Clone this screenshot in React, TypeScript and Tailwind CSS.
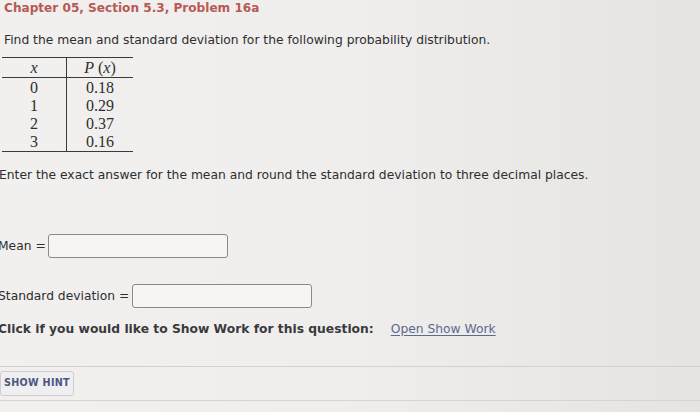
import React from "react";

const rows = [
  { x: "0", p: "0.18" },
  { x: "1", p: "0.29" },
  { x: "2", p: "0.37" },
  { x: "3", p: "0.16" },
];

const App = () => {
  return (
    <div
      className="w-[700px] h-[412px] overflow-hidden bg-gradient-to-r from-[#f1f0ee] via-[#efeeec] to-[#e6e4e1] text-[#2e2e30] text-[12.3px] relative"
      style={{ fontFamily: '"DejaVu Sans", Verdana, sans-serif' }}
    >
      <div className="flex flex-col">
        {/* Title */}
        <div className="pl-[4px] leading-[16px] font-bold text-[#b65a55] text-[12.1px]">
          Chapter 05, Section 5.3, Problem 16a
        </div>

        {/* Question */}
        <div className="pl-[4px] mt-[16px] leading-[16px]">
          Find the mean and standard deviation for the following probability distribution.
        </div>

        {/* Table */}
        <div className="ml-[2px] mt-[9px] w-[131px]" style={{ fontFamily: '"Liberation Serif", "Times New Roman", serif' }}>
          <div className="border-t border-b border-[#3a3a3a] flex text-[16px]">
            <div className="w-[65px] border-r border-[#3a3a3a] text-center italic leading-[19px]">x</div>
            <div className="flex-1 text-center leading-[19px]">
              <span className="italic">P</span> (<span className="italic">x</span>)
            </div>
          </div>
          <div className="border-b border-[#3a3a3a] flex text-[16px]">
            <div className="w-[65px] border-r border-[#3a3a3a] text-center leading-[18px] pt-[1px]">
              {rows.map((r) => (
                <div key={r.x}>{r.x}</div>
              ))}
            </div>
            <div className="flex-1 text-center leading-[18px] pt-[1px]">
              {rows.map((r) => (
                <div key={r.x}>{r.p}</div>
              ))}
            </div>
          </div>
        </div>

        {/* Instructions */}
        <div className="mt-[15px] ml-[-1px] leading-[16px]">
          Enter the exact answer for the mean and round the standard deviation to three decimal places.
        </div>

        {/* Mean */}
        <div className="mt-[51px] ml-[-2px] flex items-center gap-[2px]">
          <span>Mean =</span>
          <div className="w-[180px] h-[24px] border border-[#8a8a8c] rounded-[3px] bg-[#f6f5f3]" />
        </div>

        {/* Standard deviation */}
        <div className="mt-[26px] ml-[-2px] flex items-center gap-[3px]">
          <span>Standard deviation =</span>
          <div className="w-[180px] h-[24px] border border-[#8a8a8c] rounded-[3px] bg-[#f6f5f3]" />
        </div>

        {/* Show work */}
        <div className="mt-[13px] ml-[-2px] flex items-center leading-[16px]">
          <span className="font-bold text-[#3a3a3e]">Click if you would like to Show Work for this question:</span>
          <span className="ml-[17px] underline underline-offset-2 text-[#5b6b8e]">Open Show Work</span>
        </div>

        {/* Hint */}
        <div className="mt-[29px] border-t border-[#d3d1ce] h-[34px] flex items-center">
          <div className="h-[25px] w-[74px] justify-center flex items-center border border-[#cfcdd2] rounded-[3px] bg-[#efeff2] text-[9.6px] font-bold text-[#4d5680] tracking-[0.3px]">
            SHOW HINT
          </div>
        </div>
        <div className="border-t border-[#d6d4d1]" />
      </div>
    </div>
  );
};

export default App;
